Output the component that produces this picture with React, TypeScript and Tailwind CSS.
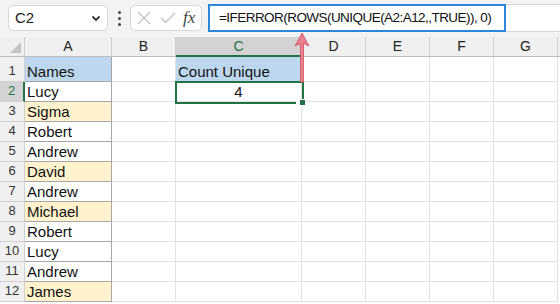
import React from "react";

const cols = [
  { key: "A", w: 87 },
  { key: "B", w: 64 },
  { key: "C", w: 126 },
  { key: "D", w: 64 },
  { key: "E", w: 64 },
  { key: "F", w: 64 },
  { key: "G", w: 64 },
];

const names = ["Names", "Lucy", "Sigma", "Robert", "Andrew", "David", "Andrew", "Michael", "Robert", "Lucy", "Andrew", "James"];
const yellow = [3, 6, 8, 12];

export default function App() {
  return (
    <div className="relative w-[560px] h-[304px] overflow-hidden bg-white" style={{ fontFamily: '"Liberation Sans", Arial, sans-serif' }}>
      {/* toolbar */}
      <div className="flex items-start h-[37px] bg-[#f3f3f3] pt-[4px]">
        <div className="ml-[8px] mt-[1px] w-[100px] h-[26px] bg-white border border-[#d6d6d6] rounded-[5px] flex items-center pl-[6px] pr-[6px] justify-between">
          <span className="text-[15px] text-[#222]">C2</span>
          <svg width="10" height="7" viewBox="0 0 10 7"><path d="M1.5 1.5 L5 5 L8.5 1.5" fill="none" stroke="#333" strokeWidth="1.8" /></svg>
        </div>
        <div className="w-[22px] h-[28px] flex flex-col items-center justify-center gap-[3px]">
          <div className="w-[3px] h-[3px] bg-[#444] rounded-full" />
          <div className="w-[3px] h-[3px] bg-[#444] rounded-full" />
          <div className="w-[3px] h-[3px] bg-[#444] rounded-full" />
        </div>
        <div className="mt-[1px] w-[72px] h-[26px] bg-white border border-[#d6d6d6] rounded-[5px] flex items-center pl-[6px]">
          <svg width="14" height="14" viewBox="0 0 14 14"><path d="M1 1 L13 13 M13 1 L1 13" stroke="#c4c4c4" strokeWidth="1.3" /></svg>
          <svg className="ml-[9px]" width="16" height="12" viewBox="0 0 16 12"><path d="M1 5.5 L5.5 10.5 L15 1" fill="none" stroke="#c4c4c4" strokeWidth="1.3" /></svg>
          <span className="ml-[7px] text-[17px] italic text-[#444]" style={{ fontFamily: '"Liberation Serif", "Times New Roman", serif' }}>fx</span>
        </div>
        <div className="ml-[6px] flex-1 h-[28px] bg-white border-t border-b border-[#d6d6d6] flex">
          <div className="w-[298px] h-[28px] -mt-px border-2 border-[#2b88d8] flex items-center pl-[9px]">
            <span className="text-[13.5px] tracking-[-0.55px] text-[#111] whitespace-nowrap">=IFERROR(ROWS(UNIQUE(A2:A12,,TRUE)), 0)</span>
          </div>
        </div>
      </div>
      {/* column headers */}
      <div className="flex h-[20px] bg-[#f0f0f0] border-b border-[#bdbdbd]">
        <div className="w-[25px] h-full border-r border-[#d0d0d0] relative">
          <svg className="absolute right-[3px] bottom-[3px]" width="11" height="11" viewBox="0 0 11 11"><path d="M11 0 L11 11 L0 11 Z" fill="#c4c4c4" /></svg>
        </div>
        {cols.map((c) => (
          <div
            key={c.key}
            style={{ width: c.w }}
            className={
              c.key === "C"
                ? "h-[20px] -mb-px border-r border-[#d0d0d0] border-b-2 border-b-[#217346] bg-[#d3d3d3] flex items-center justify-center text-[14px] text-[#217346]"
                : "h-full border-r border-[#d0d0d0] flex items-center justify-center text-[14px] text-[#222]"
            }
          >
            {c.key}
          </div>
        ))}
      </div>
      {/* rows */}
      {names.map((n, i) => {
        const r = i + 1;
        const sel = r === 2;
        return (
          <div key={r} className={r === 1 ? "flex h-[25px]" : "flex h-[20px]"}>
            <div
              className={
                sel
                  ? "w-[25px] h-full bg-[#d3d3d3] border-r-2 border-r-[#217346] border-b border-[#d0d0d0] flex items-end pb-[1px] justify-center text-[13px] text-[#217346]"
                  : "w-[25px] h-full bg-[#f0f0f0] border-r border-[#bdbdbd] border-b border-[#d0d0d0] flex items-end pb-[1px] justify-center text-[13px] text-[#333]"
              }
            >
              {r}
            </div>
            <div
              className={
                "w-[87px] h-full border-r border-b border-[#a6a6a6] flex items-end pl-[2px] text-[15px] leading-[19px] text-[#111] " +
                (r === 1 ? "bg-[#bdd7ee]" : yellow.includes(r) ? "bg-[#fff2cc]" : "bg-white")
              }
            >
              {n}
            </div>
            <div className="w-[64px] h-full border-r border-b border-[#e1e1e1]" />
            <div
              className={
                "w-[126px] h-full border-r border-b border-[#e1e1e1] flex items-end text-[15px] leading-[19px] text-[#111] " +
                (r === 1 ? "bg-[#bdd7ee] pl-[2px]" : "justify-center")
              }
            >
              {r === 1 ? "Count Unique" : r === 2 ? "4" : ""}
            </div>
            {[0, 1, 2, 3].map((k) => (
              <div key={k} className="w-[64px] h-full border-r border-b border-[#e1e1e1]" />
            ))}
          </div>
        );
      })}
      {/* selection overlay C2 */}
      <div className="absolute left-[175px] top-[81px] w-[129px] h-[23px] border-2 border-[#217346]" />
      <div className="absolute left-[296px] top-[98px] w-[4px] h-[8px] bg-white" />
      <div className="absolute left-[299px] top-[99px] w-[7px] h-[7px] bg-[#217346] border border-white" />
      {/* red arrow */}
      <svg className="absolute left-[294px] top-[31px]" width="16" height="52" viewBox="0 0 16 52">
        <path d="M8 2 L15 15 L9.5 12.5 L9.5 51 L6.5 51 L6.5 12.5 L1 15 Z" fill="#e7818f" stroke="#d64a5e" strokeWidth="0.8" />
      </svg>
    </div>
  );
}
